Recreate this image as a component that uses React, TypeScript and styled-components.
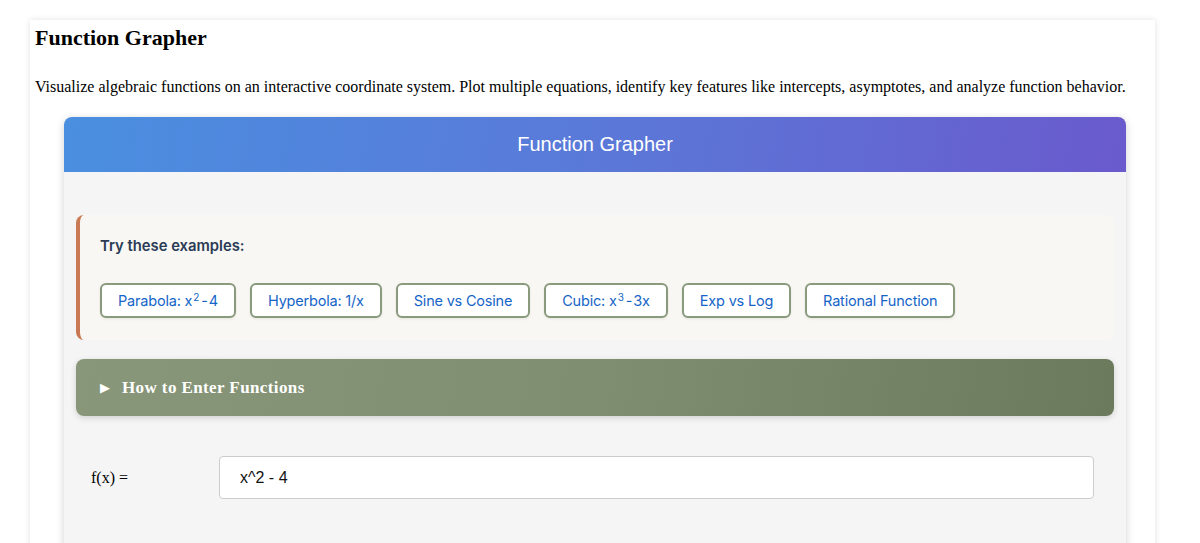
import React, { useState } from "react";
import styled, { createGlobalStyle } from "styled-components";

const GlobalStyle = createGlobalStyle`
	html, body {
		margin: 0;
		padding: 0;
		background: #ffffff;
		font-family: "Liberation Serif", "Times New Roman", serif;
		color: #000;
	}
`;

const Page = styled.div`
	padding: 20px 45px 40px 30px;
`;

const Card = styled.div`
	background: #fff;
	padding: 5px;
	box-shadow: 0 0 6px rgba(0, 0, 0, 0.12);
`;

const PageTitle = styled.h2`
	margin: 0;
	font-size: 22px;
	line-height: 25px;
	font-weight: bold;
`;

const Intro = styled.p`
	margin: 28px 0 0;
	font-size: 16px;
	line-height: 18px;
`;

const App = styled.div`
	margin: 21px 24px 0 29px;
	background: #f5f5f5;
	border-radius: 8px;
	overflow: hidden;
	box-shadow: 0 2px 8px rgba(0, 0, 0, 0.18);
`;

const Header = styled.div`
	height: 55px;
	display: flex;
	align-items: center;
	justify-content: center;
	background: linear-gradient(100deg, #4a8fe0 0%, #5a79d8 50%, #6a5acd 100%);
	color: #fff;
	font-family: "Liberation Sans", Arial, sans-serif;
	font-size: 20px;
`;

const Body = styled.div`
	padding: 43px 12px 60px;
	display: flex;
	flex-direction: column;
`;

const Examples = styled.div`
	background: #f8f7f3;
	border-left: 4px solid #c97a55;
	border-radius: 8px;
	padding: 22px 20px 22px;
	font-family: Inter, "Noto Sans", sans-serif;
`;

const ExamplesTitle = styled.div`
	font-size: 14.8px;
	font-weight: 600;
	line-height: 18px;
	color: #2a3b56;
`;

const ExampleRow = styled.div`
	display: flex;
	flex-wrap: wrap;
	gap: 14px;
	margin-top: 28px;
`;

const ExampleButton = styled.button`
	height: 35px;
	padding: 0 16px;
	background: #fff;
	border: 2px solid #8a9a7c;
	border-radius: 6px;
	box-shadow: 0 1px 3px rgba(0, 0, 0, 0.08);
	color: #1565c8;
	font-family: Inter, "Noto Sans", sans-serif;
	font-size: 14.5px;
	letter-spacing: -0.2px;
	white-space: nowrap;
	cursor: pointer;
	sup {
		font-size: 10px;
		line-height: 0;
		vertical-align: 5px;
		margin: 0 1px;
	}
`;

const Accordion = styled.div`
	margin-top: 19px;
	border-radius: 8px;
	background: linear-gradient(100deg, #889679 0%, #7f8d70 50%, #6b7a5c 100%);
	box-shadow: 0 2px 6px rgba(0, 0, 0, 0.15);
	color: #fff;
`;

const AccordionHead = styled.div`
	height: 57px;
	display: flex;
	align-items: center;
	gap: 10px;
	padding: 0 24px;
	font-family: "Liberation Serif", "Times New Roman", serif;
	font-weight: bold;
	font-size: 17px;
	letter-spacing: 0.4px;
	cursor: pointer;
`;

const Arrow = styled.span`
	font-size: 13px;
	font-family: "DejaVu Sans", sans-serif;
	width: 12px;
`;

const AccordionText = styled.div`
	padding: 0 24px 20px;
	font-family: Inter, sans-serif;
	font-size: 14px;
	line-height: 1.6;
`;

const FunctionRow = styled.div`
	display: flex;
	align-items: center;
	margin-top: 40px;
	padding: 0 20px 0 15px;
`;

const Label = styled.label`
	width: 128px;
	flex-shrink: 0;
	font-size: 16px;
`;

const FunctionInput = styled.input`
	flex: 1;
	height: 43px;
	box-sizing: border-box;
	padding: 0 20px;
	border: 1px solid #cccccc;
	border-radius: 4px;
	background: #fff;
	font-family: "Liberation Sans", Arial, sans-serif;
	font-size: 16px;
	color: #111;
	outline: none;
`;

const GraphArea = styled.div`
	margin: 70px 20px 0 15px;
	height: 4600px;
	background: #fff;
	border: 1px solid #ddd;
	border-radius: 4px;
`;

const examples = [
	{ key: "parabola", label: <>Parabola: x<sup>2</sup>{"\u200A"}-{"\u200A"}4</>, expr: "x^2 - 4" },
	{ key: "hyperbola", label: <>Hyperbola: 1/x</>, expr: "1/x" },
	{ key: "trig", label: <>Sine vs Cosine</>, expr: "sin(x)" },
	{ key: "cubic", label: <>Cubic: x<sup>3</sup>{"\u200A"}-{"\u200A"}3x</>, expr: "x^3 - 3x" },
	{ key: "explog", label: <>Exp vs Log</>, expr: "exp(x)" },
	{ key: "rational", label: <>Rational Function</>, expr: "(x^2 - 1)/(x - 2)" },
];

export default function FunctionGrapherPage() {
	const [expr, setExpr] = useState("x^2 - 4");
	const [open, setOpen] = useState(false);

	return (
		<>
			<GlobalStyle />
			<Page>
				<Card>
					<PageTitle>Function Grapher</PageTitle>
					<Intro>
						Visualize algebraic functions on an interactive coordinate system. Plot multiple equations, identify key
						features like intercepts, asymptotes, and analyze function behavior.
					</Intro>
					<App>
						<Header>Function Grapher</Header>
						<Body>
							<Examples>
								<ExamplesTitle>Try these examples:</ExamplesTitle>
								<ExampleRow>
									{examples.map(ex => (
										<ExampleButton key={ex.key} onClick={() => setExpr(ex.expr)}>
											{ex.label}
										</ExampleButton>
									))}
								</ExampleRow>
							</Examples>
							<Accordion>
								<AccordionHead onClick={() => setOpen(!open)}>
									<Arrow>{open ? "▼" : "▶"}</Arrow>
									How to Enter Functions
								</AccordionHead>
								{open && (
									<AccordionText>
										Use x as the variable. Write powers with ^, e.g. x^2. Supported: sin, cos, tan, log, exp, sqrt.
									</AccordionText>
								)}
							</Accordion>
							<FunctionRow>
								<Label htmlFor="fx">f(x) =</Label>
								<FunctionInput id="fx" value={expr} onChange={e => setExpr(e.target.value)} />
							</FunctionRow>
							<GraphArea />
						</Body>
					</App>
				</Card>
			</Page>
		</>
	);
}
